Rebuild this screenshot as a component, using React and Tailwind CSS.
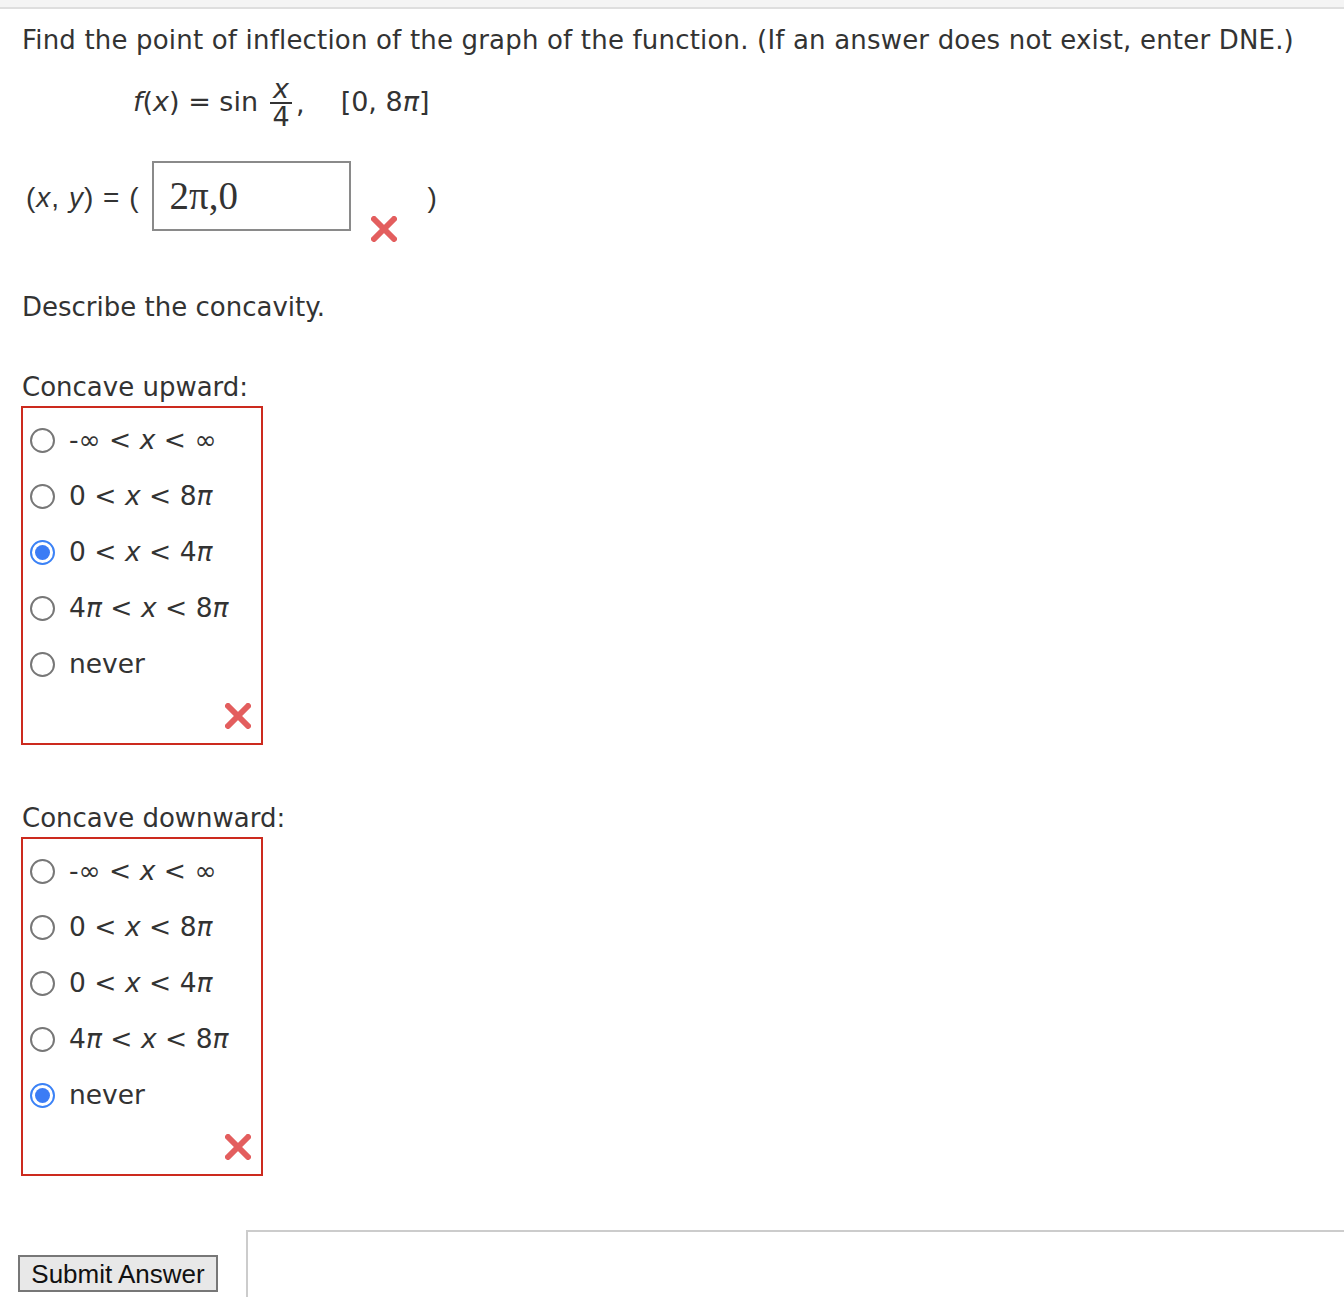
import React from "react";

const XMark = ({ className = "" }) => (
  <svg width="30" height="30" viewBox="0 0 30 30" className={"shrink-0 " + className}>
    <g stroke="#e25656" strokeWidth="6" strokeLinecap="round" opacity="0.95">
      <line x1="5" y1="5" x2="25" y2="25" />
      <line x1="25" y1="5" x2="5" y2="25" />
    </g>
  </svg>
);

const Radio = ({ checked }) =>
  checked ? (
    <span className="w-[25px] h-[25px] rounded-full border-[2px] border-[#3b82f6] flex items-center justify-center shrink-0">
      <span className="w-[15px] h-[15px] rounded-full bg-[#3b7cf5]" />
    </span>
  ) : (
    <span className="w-[25px] h-[25px] rounded-full border-[2px] border-[#777] bg-white shrink-0" />
  );

const I = ({ children }) => <span className="italic">{children}</span>;

const options = [
  <>-∞ &lt; <I>x</I> &lt; ∞</>,
  <>0 &lt; <I>x</I> &lt; 8<I>π</I></>,
  <>0 &lt; <I>x</I> &lt; 4<I>π</I></>,
  <>4<I>π</I> &lt; <I>x</I> &lt; 8<I>π</I></>,
  <>never</>,
];

const Group = ({ checked }) => (
  <div className="w-[242px] h-[339px] border-[2px] border-[#cc2a1e] flex flex-col pt-[4px] pl-[7px]">
    {options.map((o, i) => (
      <div key={i} className="h-[56px] flex items-center gap-[14px]">
        <Radio checked={i === checked} />
        <span className="text-[26.5px] leading-[32px] text-[#333]">{o}</span>
      </div>
    ))}
    <div className="flex justify-end pr-[8px] mt-[9px]">
      <XMark />
    </div>
  </div>
);

export default function App() {
  return (
    <div className="w-[1344px] h-[1297px] bg-white overflow-hidden text-[#333]" style={{ fontFamily: '"DejaVu Sans", Verdana, sans-serif' }}>
      <div className="h-[7px] bg-[#f4f4f4]" />
      <div className="h-[2px] bg-[#dedede]" />
      <div className="pl-[22px]">
        <p className="text-[26px] leading-[30px] mt-[16px] tracking-[0.18px] whitespace-nowrap">
          Find the point of inflection of the graph of the function. (If an answer does not exist, enter DNE.)
        </p>
        <div className="flex items-center mt-[17px] ml-[111px] text-[27px] h-[60px]">
          <span><I>f</I>(<I>x</I>) = sin</span>
          <span className="inline-flex flex-col items-center ml-[12px] mr-[8px]">
            <span className="italic leading-[27px]">x</span>
            <span className="w-[22px] h-[2px] bg-[#333]" />
            <span className="leading-[26px]">4</span>
          </span>
          <span className="-ml-[4px] mt-[4px]">,</span>
          <span className="ml-[36px]">[0, 8<I>π</I>]</span>
        </div>
        <div className="flex items-start mt-[29px]" style={{ fontFamily: '"Liberation Sans", Arial, sans-serif' }}>
          <span className="text-[28px] leading-[32px] mt-[21px] ml-[4px] tracking-[1px] whitespace-nowrap">(<I>x</I>, <I>y</I>) = (</span>
          <div className="w-[199px] h-[70px] border-[2px] border-[#8a8a8a] ml-[13px] flex items-center pl-[15px] shrink-0">
            <span className="text-[39px] text-[#333]" style={{ fontFamily: '"Liberation Serif", "Times New Roman", serif' }}>2π,0</span>
          </div>
          <XMark className="ml-[18px] mt-[53px]" />
          <span className="text-[28px] leading-[32px] mt-[21px] ml-[28px]">)</span>
        </div>
        <p className="text-[26px] leading-[32px] mt-[47px]">Describe the concavity.</p>
        <p className="text-[26px] leading-[32px] mt-[48px]">Concave upward:</p>
        <div className="-ml-[1px] mt-[3px]">
          <Group checked={2} />
        </div>
        <p className="text-[26px] leading-[32px] mt-[57px]">Concave downward:</p>
        <div className="-ml-[1px] mt-[3px]">
          <Group checked={4} />
        </div>
        <div className="flex items-start mt-[54px] -ml-[4px]">
          <button className="mt-[25px] w-[200px] h-[37px] border-[2px] border-[#777] bg-[#e8e8e8] text-[26px] leading-[30px] text-[#111] flex items-center justify-center shrink-0" style={{ fontFamily: '"Liberation Sans", Arial, sans-serif' }}>
            Submit Answer
          </button>
          <div className="ml-[28px] flex-1 h-[80px] border-t-[2px] border-l-[2px] border-[#cccccc]" />
        </div>
      </div>
    </div>
  );
}
